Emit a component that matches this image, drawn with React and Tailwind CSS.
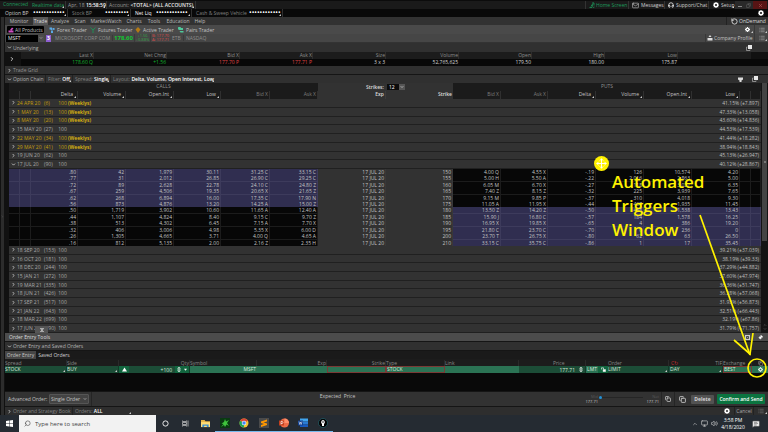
import clsx from 'clsx';
import { ChevronDown, ChevronRight, ChevronUp, Copy, Headphones, List, Mail, MessageSquareText, Monitor, Move, Pin, RotateCcw, Search, Volume2, X } from 'lucide-react';

const QUOTE_COLS = 'grid grid-cols-[16fr_73fr_73fr_73fr_73fr_73fr_73fr_73fr_73fr_73fr_73fr_17fr]';
const CHAIN_COLS = 'grid grid-cols-[11fr_11fr_47fr_48fr_48fr_47fr_49fr_48fr_68fr_67fr_48fr_47fr_48fr_48fr_48fr_48fr_11fr_10fr]';
const ORDER_COLS = 'grid grid-cols-[62fr_52fr_71fr_67fr_70fr_59fr_59fr_74fr_67fr_12fr_10fr_61fr_54fr_29fr_16fr]';

const nearExpirations = [
    ['24 APR 20', '(6)', true, '41.15% (±7.897)'],
    ['1 MAY 20', '(13)', true, '47.33% (±13.058)'],
    ['8 MAY 20', '(20)', true, '43.60% (±14.836)'],
    ['15 MAY 20', '(27)', false, '44.53% (±17.539)'],
    ['22 MAY 20', '(34)', true, '41.44% (±18.282)'],
    ['29 MAY 20', '(41)', true, '38.94% (±18.843)'],
    ['19 JUN 20', '(62)', false, '45.13% (±26.947)'],
    ['17 JUL 20', '(90)', false, '40.12% (±28.867)'],
];

const farExpirations = [
    ['18 SEP 20', '(153)', false, '39.21% (±37.039)'],
    ['16 OCT 20', '(181)', false, '38.19% (±39.33)'],
    ['18 DEC 20', '(244)', false, '37.29% (±44.882)'],
    ['15 JAN 21', '(272)', false, '37.60% (±47.974)'],
    ['19 MAR 21', '(335)', false, '36.36% (±51.747)'],
    ['18 JUN 21', '(426)', false, '36.28% (±57.068)'],
    ['17 SEP 21', '(517)', false, '31.93% (±56.873)'],
    ['21 JAN 22', '(643)', false, '32.51% (±66.443)'],
    ['18 MAR 22', '(699)', false, '32.19% (±67.86)'],
    ['17 JUN 22', '(790)', false, '31.79% (±71.757)'],
];

const strikes = [
    ['.80', '42', '1,979', '30.11', '31.25 C', '33.15 C', '150', '4.00 Q', '4.55 X', '-.19', '126', '10,574', '4.20'],
    ['.77', '31', '2,012', '26.85', '26.90 C', '29.25 C', '155', '5.00 H', '5.50 A', '-.22', '2,016', '2,863', '5.00'],
    ['.72', '89', '2,628', '22.78', '24.10 C', '24.80 Z', '160', '6.05 M', '6.70 X', '-.27', '118', '3,027', '6.35'],
    ['.67', '259', '4,506', '19.35', '20.65 X', '21.65 Z', '165', '7.40 Z', '8.15 Z', '-.32', '225', '3,939', '7.65'],
    ['.62', '268', '6,894', '16.00', '17.35 C', '17.90 N', '170', '9.15 M', '9.85 P', '-.37', '310', '4,018', '9.30'],
    ['.56', '873', '4,876', '13.20', '14.25 A', '15.00 Z', '175', '11.05 A', '11.95 X', '-.44', '467', '1,935', '11.45'],
    ['.50', '1,719', '3,902', '10.60', '11.65 A', '12.40 A', '180', '13.50 Z', '14.20 Z', '-.50', '458', '1,538', '13.43'],
    ['.44', '1,107', '4,824', '8.40', '9.15 C', '9.70 Z', '185', '15.90 J', '16.80 C', '-.57', '184', '1,578', '16.25'],
    ['.38', '513', '4,302', '6.45', '7.15 A', '7.70 X', '190', '16.95 X', '19.85 X', '-.65', '4', '386', '19.20'],
    ['.32', '406', '3,006', '4.98', '5.35 X', '6.00 D', '195', '21.80 C', '23.70 C', '-.70', '0', '236', '0'],
    ['.26', '1,305', '4,665', '3.71', '4.00 Q', '4.65 A', '200', '23.70 T', '26.75 X', '-.80', '62', '63', '26.50'],
    ['.16', '812', '5,135', '2.00', '2.16 Z', '2.35 H', '210', '33.15 C', '35.75 C', '-.86', '1', '17', '35.45'],
];

const quotes = [
    ['Last X', '178.60 Q', 'text-[#12b32c]'],
    ['Net Chng', '+1.56', 'text-[#12b32c]'],
    ['Bid X', '177.70 P', 'text-[#e04646]'],
    ['Ask X', '177.71 P', 'text-[#e04646]'],
    ['Size', '3 x 3', 'text-[#d8d8d8]'],
    ['Volume', '52,765,625', 'text-[#d8d8d8]'],
    ['Open', '179.50', 'text-[#d8d8d8]'],
    ['High', '180.00', 'text-[#d8d8d8]'],
    ['Low', '175.87', 'text-[#d8d8d8]'],
];

const Corner = () => (
    <svg viewBox="0 0 2 2" className="absolute right-px bottom-px size-[2px]"><path d="M2 0V2H0Z" fill="#ccc" /></svg>
);

const Gear = ({ className }) => (
    <svg viewBox="0 0 24 24" className={clsx('shrink-0', className)} fill="currentColor">
        <path fillRule="evenodd" d="M10 0h4l.6 3.400 2.200.9L19.600 2.300l2.400 2.400-2 2.800.9 2.200L24 10v4l-3.100.6-.9 2.200 2 2.800-2.400 2.400-2.800-2-2.200.9L14 24h-4l-.6-3.100-2.200-.9-2.800 2L2 19.600l2-2.800-.9-2.200L0 14v-4l3.100-.3.9-2.200-2-2.800L4.400 2.300l2.800 2 2.200-.9ZM12 8a4 4 0 100 8 4 4 0 000-8Z" />
    </svg>
);

const Detach = ({ className }) => (
    <svg viewBox="0 0 12 12" className={clsx('shrink-0', className)}>
        <path d="M4 0h8v8H4Z" fill="#e8e8e8" />
        <path d="M3 4H1v7h7V9" fill="none" stroke="#aaa" strokeWidth="1.500" />
    </svg>
);

const Spinner = () => (
    <svg viewBox="0 0 8 10" className="h-[5px] w-1"><path d="M4 0l4 3H0ZM1 4.500h6v1H1ZM4 10l4-3H0Z" fill="#fff" /></svg>
);

const TopBar = () => (
    <header className="flex h-[9px] items-stretch border-t border-[#0c0c0c] bg-[#1a1a1a] text-[#999]">
        <span className="w-[30px] pl-[3px] text-[#1d9c5c]">Connected</span>
        <button className="relative w-[36px] border-r border-[#333] pl-[2px] text-left text-[#1d9c5c]">Realtime data<Corner /></button>
        <button className="relative w-[41px] border-r border-[#333] pl-[2px] text-left">Apr, 18 <span className="font-semibold text-white">15:58:59</span><Corner /></button>
        <button className="relative w-[89px] border-r border-[#333] pl-[2px] text-left">Account: <span className="font-semibold text-[#ececec]">&lt;TOTAL&gt; (ALL ACCOUNTS)</span><Corner /></button>
        <nav className="ml-auto flex items-stretch text-[#cfcfcf]">
            <button className="flex w-[43px] items-center gap-px border-l border-[#333] pl-[3px] text-[#1d9c5c]">
                <svg viewBox="0 0 12 12" className="size-[6px] shrink-0"><path d="M1 11h5l2-9M4 9l2-4M8 11l3-1M7 1l3 1v5" fill="none" stroke="currentColor" strokeWidth="1.500" /></svg>
                Home Screen
            </button>
            <button className="flex w-9 items-center gap-[2px] border-l border-[#333] pl-[3px]"><Mail className="size-[7px]" />Messages</button>
            <button className="flex w-11 items-center gap-[2px] border-l border-[#333] pl-[3px]"><Headphones className="size-[6px] shrink-0 text-white" strokeWidth={3} />Support/Chat</button>
            <button className="relative flex w-[27px] items-center gap-[2px] border-l border-[#333] pl-1"><Gear className="size-[6px] text-white" />Setup<Corner /></button>
            <button className="flex w-[9px] items-center justify-center bg-[#292929]" aria-label="Minimize"><i className="mt-[2px] block h-px w-1 bg-[#888]" /></button>
            <button className="flex w-[9px] items-center justify-center bg-[#292929] text-[#777]" aria-label="Restore"><Copy className="size-[5px] -scale-x-100" /></button>
            <button className="mr-px flex w-[14px] items-center justify-center bg-[#571414] text-[#b05050]" aria-label="Close"><X className="size-[5px]" strokeWidth={3} /></button>
        </nav>
    </header>
);

const Balance = ({ label, stars, className, labelClass }) => (
    <button className={clsx('relative flex items-center border-r border-[#303030] pl-1', className)}>
        <span className={clsx('shrink-0 text-left', labelClass)}>{label}</span>
        <span className="text-[7px] text-white">{'•'.repeat(stars)}</span>
        <Corner />
    </button>
);

const BalanceBar = () => (
    <div className="flex h-2 items-stretch bg-[#090909] pl-px text-[#c8c8c8]">
        <Balance label="Option BP" stars={12} className="w-[67px]" labelClass="w-7" />
        <Balance label="Stock BP" stars={9} className="w-[63px] text-[#808080]" labelClass="w-[33px]" />
        <Balance label="Net Liq" stars={12} className="w-[61px] text-white" labelClass="w-[21px]" />
        <Balance label="Cash & Sweep Vehicle" stars={12} className="w-[91px] text-[#808080]" labelClass="w-[53px]" />
        <span className="ml-auto flex w-[15px] items-center justify-center text-white"><Gear className="size-[6px]" /></span>
    </div>
);

const MainTabs = () => (
    <nav className="flex h-2 items-stretch bg-[#323232] text-[#bdbdbd]">
        <button className="w-7">Monitor</button>
        <button className="w-[15px] bg-[#585858] text-[#ddd]">Trade</button>
        <button className="w-6">Analyze</button>
        <button className="w-4">Scan</button>
        <button className="w-9">MarketWatch</button>
        <button className="w-5">Charts</button>
        <button className="w-5">Tools</button>
        <button className="w-7">Education</button>
        <button className="w-4">Help</button>
        <button className="ml-auto flex w-[42px] items-center gap-px border-l border-[#222] pl-1 text-[#ddd]"><RotateCcw className="size-[7px]" strokeWidth={3} />OnDemand</button>
    </nav>
);

const Products = () => (
    <div className="flex h-[9px] items-center bg-[#4a4a4a] text-[#c4c4c4]">
        <button className="ml-[2px] flex h-[7px] w-[37px] items-center gap-px rounded-[1px] bg-black pl-px">
            <svg viewBox="0 0 12 12" className="size-[6px] shrink-0"><path d="M1 7h10v4H1ZM4 6l4-5 3 2-4 4Z" fill="#d14fc4" /></svg>All Products
        </button>
        <button className="flex w-[43px] items-center gap-[2px] pl-[5px]">
            <svg viewBox="0 0 12 12" className="size-[6px] shrink-0"><path d="M1 1h5v4H1ZM7 2h4v4H7ZM3 5l3 3 3-3M4 8h4v4H4Z" fill="#5aa9e6" /></svg>Forex Trader
        </button>
        <button className="flex w-[45px] items-center gap-[2px] pl-[3px]">
            <svg viewBox="0 0 12 12" className="size-[6px] shrink-0"><path d="M1 1l5 5 5-5M6 6v6" fill="none" stroke="#1e8d55" strokeWidth="2" /></svg>Futures Trader
        </button>
        <button className="flex w-[43px] items-center gap-[2px] pl-[3px]">
            <svg viewBox="0 0 12 12" className="size-[6px] shrink-0"><path d="M6 0l5 5-5 7-5-7Z" fill="#b47a14" /></svg>Active Trader
        </button>
        <button className="flex items-center gap-[2px] pl-[3px]">
            <svg viewBox="0 0 12 12" className="size-[6px] shrink-0"><path d="M0 3a3 3 0 016-1h4v4H4a3 3 0 01-4-3ZM3 8h8v3H5Z" fill="#4fc99a" /></svg>Pairs Trader
        </button>
        <span className="relative ml-auto flex h-full w-[14px] items-center justify-center text-white"><Gear className="size-[5px]" /><Corner /></span>
        <span className="relative flex h-full w-[14px] items-center justify-center border-l border-[#383838]"><List className="size-[6px]" /><Corner /></span>
    </div>
);

const SymbolBar = () => (
    <div className="flex h-[9px] items-center border-b border-[#333] bg-[#464646] text-[#8d8d8d]">
        <label className="ml-px flex h-[7px] w-[38px] items-center bg-black">
            <input aria-label="Symbol" defaultValue="MSFT" className="h-[7px] w-8 pl-[2px] text-[#e6e6e6] outline-none" />
            <span className="flex h-full w-[6px] items-center justify-center bg-[#4c4c4c] text-[#aaa]"><ChevronDown className="size-1" strokeWidth={4} /></span>
        </label>
        <span className="ml-[2px] flex h-[7px] w-[5px] items-center justify-center bg-[#8e5fd0] font-bold text-white">3</span>
        <span className="w-[61px] pl-1">MICROSOFT CORP COM</span>
        <b className="w-[22px] border-l border-[#3a3a3a] text-center text-[6px] text-[#14c432]">178.60</b>
        <span className="w-4 border-l border-[#3a3a3a] text-center text-[4px] leading-[4px] text-[#35a549]">+1.56<br />+0.88%</span>
        <span className="w-[20px] border-l border-[#3a3a3a] text-center text-[4px] leading-[4px] text-[#dd4c4c]">B: 177.70<br />A: 177.71</span>
        <span className="w-[13px] pl-[2px]">ETB</span>
        <span className="border-l border-[#3a3a3a] pl-[2px]">NASDAQ</span>
        <button className="ml-auto flex h-full w-[49px] items-center gap-px border-l border-[#383838] pl-px text-[#c0c0c0]">
            <svg viewBox="0 0 12 12" className="size-[6px] shrink-0"><path d="M1 6h10v5H1ZM3 4h6l-3-4Z" fill="#ddd" /></svg>Company Profile
        </button>
        <span className="relative flex h-full w-[14px] items-center justify-center border-l border-[#383838] text-[#bbb]"><List className="size-[6px]" /><Corner /></span>
    </div>
);

const Underlying = () => (
    <section>
        <div className="flex h-[9px] items-center bg-[#303030] pl-[2px] text-[#b4b4b4]">
            <ChevronDown className="mr-px size-[5px] text-white" strokeWidth={3} />Underlying
            <Detach className="mr-4 ml-auto size-[6px]" />
        </div>
        <table className="block w-full text-right">
            <thead className="block">
                <tr className={clsx(QUOTE_COLS, 'h-[7px] bg-[#1c1c1c] text-[#8f8f8f]')}>
                    <th className="relative z-10 bg-[#111]"><ChevronRight className="absolute top-1 left-1 size-[6px] text-white" strokeWidth={3} /></th>
                    {quotes.map(([name]) => <th key={name} className="border-r border-[#2d2d2d] font-normal">{name}</th>)}
                    <th />
                    <th className="bg-[#111]" />
                </tr>
            </thead>
            <tbody className="block">
                <tr className={clsx(QUOTE_COLS, 'h-[7px] bg-[#080808]')}>
                    <td className="bg-[#111]" />
                    {quotes.map(([name, value, color]) => <td key={name} className={clsx('pr-px', color)}>{value}</td>)}
                </tr>
            </tbody>
        </table>
    </section>
);

const Expiration = ({ row, open }) => {
    const [date, days, weekly, move] = row;
    return (
        <tr className="flex items-center border-b border-[#202020] bg-[#323232] text-[#a8a8a8]">
            <td className={clsx('flex flex-1 items-center pl-[2px]', weekly && 'text-[#c29d0c]')}>
                {open ? <ChevronDown className="size-[5px] text-white" strokeWidth={3} /> : <ChevronRight className="size-[5px] text-white" strokeWidth={3} />}
                <span className="w-[28px] pl-px">{date}</span>
                <span className="w-[13px]">{days}</span>
                <span className="w-[11px] text-center">100</span>
                {weekly && <span className="font-semibold text-[#e2bf0c]">(Weeklys)</span>}
            </td>
            <td className="pr-[2px] text-[#bdbdbd]">{move}</td>
        </tr>
    );
};

const StrikeRow = ({ row, index }) => {
    const itm = index < 6;
    const call = clsx('border-r border-b pr-px', itm ? 'border-[#3d3b5c] bg-[#302e50]' : 'border-[#1c1c1c] bg-[#070707]');
    const put = clsx('border-r border-b pr-px', itm ? 'border-[#1c1c1c] bg-[#070707]' : 'border-[#3d3b5c] bg-[#302e50]');
    const mid = 'border-r border-[#383838] bg-[#323232] pr-px';
    return (
        <tr className={clsx(CHAIN_COLS, 'text-right text-[#c4c4c4]')}>
            <td className={call} />
            <td className={call} />
            {row.slice(0, 6).map((v, i) => <td key={i} className={call}>{v}</td>)}
            <td className={mid}>17 JUL 20</td>
            <td className={mid}>{row[6]}</td>
            {row.slice(7).map((v, i) => <td key={i} className={put}>{v}</td>)}
            <td className={put} />
            <td className={put} />
        </tr>
    );
};

const Sortable = ({ children }) => <th className="relative border-r border-[#303030] pr-1 font-normal text-[#c2c2c2]">{children}<Corner /></th>;
const Fixed = ({ children }) => <th className="border-r border-[#303030] pr-px font-normal text-[#7c7c7c]">{children}</th>;

const OptionChain = () => (
    <section>
        <div className="flex h-2 items-center bg-[#303030] pl-[2px] text-[#909090]"><ChevronRight className="mr-px size-[5px] text-white" strokeWidth={3} />Trade Grid</div>
        <div className="mt-px flex h-2 items-stretch bg-[#303030] pl-[2px] text-[#828282]">
            <span className="flex w-[38px] items-center text-[#b4b4b4]"><ChevronDown className="mr-px size-[5px] text-white" strokeWidth={3} />Option Chain</span>
            <button className="relative w-[27px] border-l border-[#222] pl-[2px] text-left">Filter: <span className="font-semibold text-white">Off</span><Corner /></button>
            <button className="relative w-[38px] border-l border-[#222] pl-[2px] text-left">Spread: <span className="font-semibold text-white">Single</span><Corner /></button>
            <button className="relative w-[105px] border-l border-[#222] pl-[2px] text-left">Layout: <span className="font-semibold text-white">Delta, Volume, Open Interest, Low</span><Corner /></button>
            <span className="mr-[10px] ml-auto flex items-center gap-[9px] text-[#ddd]">
                <svg viewBox="0 0 10 10" className="size-[5px]"><path d="M0 1h10v4L7 7v3H3V7L0 5Z" fill="#ddd" /></svg>
                <Detach className="size-[6px]" />
            </span>
        </div>
        <div className="flex">
            <table className="relative block flex-1 border-l-4 border-[#111] bg-[#1b1b1b]">
                <thead className="block text-right">
                    <tr className="grid h-2 grid-cols-[309fr_135fr_308fr] text-center text-[#929292]">
                        <th className="font-normal">CALLS</th>
                        <th className="flex items-center justify-center gap-[3px] bg-[#323232] font-semibold text-[#ddd]">
                            <label htmlFor="strikes">Strikes:</label>
                            <span className="flex h-[6px] items-center bg-[#0c0c0c]">
                                <select id="strikes" className="h-[6px] w-3 appearance-none pl-[2px] font-normal text-white"><option>12</option></select>
                                <span className="flex h-full w-[6px] items-center bg-[#555]"><ChevronDown className="ml-px size-1" strokeWidth={4} /></span>
                            </span>
                        </th>
                        <th className="font-normal">PUTS</th>
                    </tr>
                    <tr className={clsx(CHAIN_COLS, 'h-2')}>
                        <Fixed /><Fixed />
                        <Sortable>Delta</Sortable><Sortable>Volume</Sortable><Sortable>Open.Int</Sortable><Sortable>Low</Sortable>
                        <Fixed>Bid X</Fixed><Fixed>Ask X</Fixed>
                        <th className="border-r border-[#3c3c3c] bg-[#323232] pr-px font-semibold text-[#ddd]">Exp</th>
                        <th className="bg-[#323232] pr-px font-semibold text-[#ddd]">Strike</th>
                        <Fixed>Bid X</Fixed><Fixed>Ask X</Fixed>
                        <Sortable>Delta</Sortable><Sortable>Volume</Sortable><Sortable>Open.Int</Sortable><Sortable>Low</Sortable>
                        <Fixed /><Fixed />
                    </tr>
                </thead>
                <tbody className="grid h-[70px] auto-rows-fr">
                    {nearExpirations.map((row, i) => <Expiration key={row[0]} row={row} open={i === 7} />)}
                </tbody>
                <tbody className="grid h-[77px] auto-rows-fr">
                    {strikes.map((row, i) => <StrikeRow key={row[6]} row={row} index={i} />)}
                </tbody>
                <tbody className="grid h-[87px] auto-rows-fr">
                    {farExpirations.map((row) => <Expiration key={row[0]} row={row} />)}
                </tbody>
                <caption className="absolute bottom-0 left-[26px] flex h-[7px] w-[13px] items-center justify-center bg-[#555] text-white">
                    <svg viewBox="0 0 8 8" className="size-1"><path d="M0 0h8v1H0ZM1 3h6L4 6ZM0 7h8v1H0Z" fill="#fff" /></svg>
                </caption>
            </table>
            <div className="flex w-[7px] flex-col items-center bg-[#141414] text-[#999]">
                <div className="flex h-[158px] w-[5px] items-center justify-center bg-[#444]"><i className="size-[2px] bg-[#777]" /></div>
                <span className="mt-auto flex flex-col pb-[2px]"><ChevronUp className="size-1" /><ChevronDown className="size-1" /></span>
            </div>
        </div>
    </section>
);

const OrderEntry = () => {
    const head = 'border-r border-[#2a2a2a] font-normal';
    const dim = 'relative border-r border-[#123a28] bg-[#1c4d37]';
    const lit = 'bg-[#2b7354]';
    return (
        <section>
            <div className="flex h-2 items-center bg-[#4c4c4c] pl-1 text-[#dcdcdc]">
                Order Entry Tools
                <span className="mr-[5px] ml-auto flex items-center gap-2 text-white"><X className="size-[5px] border border-[#ccc]" /><Pin className="size-[5px] rotate-45 fill-white" /></span>
            </div>
            <div className="mt-px flex h-2 items-center bg-[#303030] pl-[2px] text-[#b4b4b4]"><ChevronDown className="mr-px size-[5px] text-white" strokeWidth={3} />Order Entry and Saved Orders</div>
            <div className="mt-px flex h-2 bg-[#1a1a1a] text-[#c4c4c4]">
                <button className="w-[31px] bg-[#464646]">Order Entry</button>
                <button className="w-9 text-[#d4d4d4]">Saved Orders</button>
            </div>
            <table className="block w-full text-left">
                <thead className="block bg-[#1c1c1c] pt-px">
                    <tr className={clsx(ORDER_COLS, 'h-[6px] text-[#888]')}>
                        <th className={head}>Spread</th>
                        <th className={head}>Side</th>
                        <th className={clsx(head, 'text-right')}>Qty</th>
                        <th className={head}>Symbol</th>
                        <th className={clsx(head, 'text-right')}>Exp</th>
                        <th className={clsx(head, 'text-right')}>Strike</th>
                        <th className={head}>Type</th>
                        <th className={head}>Link</th>
                        <th className={clsx(head, 'pl-[34px]')}>Price</th>
                        <th /><th />
                        <th className={head}>Order</th>
                        <th className={clsx(head, 'flex justify-between pl-[2px]')}><i className="text-[#c23030] not-italic">C↻</i>TIF</th>
                        <th className={head}>Exchange</th>
                        <th className="flex items-center justify-center text-[#bbb]"><Copy className="size-[5px]" /></th>
                    </tr>
                </thead>
                <tbody className="block bg-[#090909] pb-[18px]">
                    <tr className={clsx(ORDER_COLS, 'h-[7px] text-[#d6e8de]')}>
                        <td className={dim}>STOCK<Corner /></td>
                        <td className={dim}>BUY<Corner /></td>
                        <td className={clsx(dim, 'flex items-center')}>
                            <span className="flex h-full w-[10px] items-center justify-center bg-[#12663f]"><svg viewBox="0 0 10 8" className="size-[5px]"><path d="M5 0l5 8H0Z" fill="#fff" /></svg></span>
                            <span className="flex-1 pr-[3px] text-right">+100</span>
                            <span className="flex h-full w-[14px] items-center justify-around bg-[#12663f]">
                                <Spinner />
                                <svg viewBox="0 0 8 8" className="size-[3px]"><path d="M0 2h8L4 7Z" fill="#fff" /></svg>
                            </span>
                        </td>
                        <td className={clsx(lit, 'pr-px text-right')}>MSFT</td>
                        <td className={lit} />
                        <td className={clsx(lit, 'border border-[#7a3a35]')} />
                        <td className={clsx(lit, 'border border-[#7a3a35] leading-[5px]')}>STOCK</td>
                        <td className={lit} />
                        <td className={clsx(dim, 'flex items-center justify-end gap-1 pr-[2px]')}>177.71<Spinner /></td>
                        <td className={clsx(lit, 'text-center')}>LMT</td>
                        <td className="flex items-center justify-center bg-[#12663f]"><svg viewBox="0 0 12 12" className="size-[5px]"><path d="M5 6h6v5H5Z" fill="#fff" stroke="#fff" /><path d="M1 6V2h5v3" fill="none" stroke="#fff" strokeWidth="1.500" /></svg></td>
                        <td className={dim}>LIMIT<Corner /></td>
                        <td className={clsx(dim, 'pl-px')}>DAY<Corner /></td>
                        <td className={clsx(lit, 'border border-[#7a3a35] leading-[5px]')}>BEST</td>
                        <td className={clsx(lit, 'flex items-center justify-center')}><Gear className="size-[5px]" /></td>
                    </tr>
                </tbody>
            </table>
            <div className="mt-px flex h-[14px] items-center bg-[#323232] text-[#c4c4c4]">
                <div className="flex h-full w-[87px] items-center gap-px border-r border-[#252525] pl-[3px]">
                    <label htmlFor="advanced" className="w-10">Advanced Order:</label>
                    <span className="relative flex h-[10px] w-10 items-center rounded-[1px] border border-[#555] bg-[#434343]">
                        <select id="advanced" className="w-full appearance-none pl-px"><option>Single Order</option></select>
                        <ChevronDown className="absolute right-px size-1" strokeWidth={4} />
                    </span>
                </div>
                <span className="flex-1 self-start text-center leading-[9px]">Expected&nbsp; Price</span>
                <label className="grid h-full w-[76px] grid-cols-[15px_1fr_15px] items-center text-[#c8c8c8]">
                    <span className="text-right text-[4px] leading-[5px]"><span className="text-[#555]">Mid</span><br />177.71</span>
                    <input type="range" aria-label="Price" defaultValue="0" className="mx-px mb-1 h-px min-w-0 appearance-none bg-[#252525] [&::-webkit-slider-thumb]:size-[3px] [&::-webkit-slider-thumb]:appearance-none [&::-webkit-slider-thumb]:rounded-full [&::-webkit-slider-thumb]:bg-[#2292d8]" />
                    <span className="text-right text-[4px] leading-[5px]"><span className="text-[#555]">Nat</span><br />177.71</span>
                </label>
                <button className="ml-[2px] flex h-full w-[14px] items-center justify-center border-x border-[#252525]" aria-label="Copy order"><Copy className="size-[6px]" strokeWidth={3} /></button>
                <button className="flex h-full w-[14px] items-center justify-center" aria-label="Save order"><Copy className="size-[7px]" strokeWidth={3} /></button>
                <button className="ml-[2px] h-[9px] w-[23px] rounded-[1px] bg-[#525252] font-bold text-[#d4d4d4]">Delete</button>
                <button className="mr-[3px] ml-[3px] h-[10px] w-12 rounded-[1px] bg-[#0b7440] font-semibold text-white">Confirm and Send</button>
            </div>
            <div className="mt-px flex h-2 items-stretch bg-[#2e2e2e] pl-[2px] text-[#828282]">
                <span className="flex w-[65px] items-center"><ChevronRight className="mr-px size-[5px] shrink-0 text-white" strokeWidth={3} />Order and Strategy Book</span>
                <button className="relative w-[60px] border-l border-[#222] pl-[2px] text-left">Orders: <span className="font-semibold text-white">ALL</span><Corner /></button>
                <button className="ml-auto flex w-[14px] items-center justify-center text-white" aria-label="Clear"><Gear className="size-[6px]" /></button>
                <button className="w-5 border-x border-[#222] text-[#aaa]">Cancel</button>
                <span className="relative flex w-[14px] items-center justify-center"><List className="size-[6px]" /><Corner /></span>
            </div>
        </section>
    );
};

const Taskbar = () => (
    <footer className="flex h-[17px] items-stretch bg-[#252b32] text-[#ddd]">
        <button className="flex w-[19px] items-center justify-center" aria-label="Start">
            <svg viewBox="0 0 14 14" className="size-[7px]"><path d="M0 2l6-1v5.500H0ZM7 1l7-1v6.500H7ZM0 7.500h6V13l-6-1ZM7 7.500h7V14l-7-1Z" fill="#fff" /></svg>
        </button>
        <label className="flex w-[137px] items-center bg-[#f2f2f2] pl-[5px] text-[#444]">
            <Search className="size-[7px] -scale-x-100" />
            <input aria-label="Search" placeholder="Type here to search" className="ml-1 flex-1 text-[6px] outline-none placeholder:text-[#444]" />
        </label>
        <nav className="grid w-[177px] grid-cols-9 [&>button]:flex [&>button]:items-center [&>button]:justify-center">
            <button aria-label="Cortana"><svg viewBox="0 0 12 12" className="size-[7px]"><circle cx="6" cy="6" r="4.500" fill="none" stroke="#fff" strokeWidth="1.500" /></svg></button>
            <button aria-label="Task view"><svg viewBox="0 0 14 14" className="size-[7px]"><path d="M1 1v2h8V1M1 13v-2h8v2M1 5h8v4H1ZM12 1v12" fill="none" stroke="#ddd" strokeWidth="1.300" /></svg></button>
            <button aria-label="File Explorer"><svg viewBox="0 0 20 18" className="size-[9px]"><path d="M0 1h8l2 3h10v13H0Z" fill="#e7b445" /><path d="M0 6h20v11H0Z" fill="#ffdc75" /><path d="M3 11h14v6h-4v-3H7v3H3Z" fill="#3a8fd1" /></svg></button>
            <button className="border-b border-[#76b9ed]" aria-label="thinkorswim"><svg viewBox="0 0 20 20" className="size-[10px]"><path d="M0 0h20v20H0Z" fill="#0a3a12" /><path d="M2 18l5-6-4-1 5-3 2-6 2 5 6-3-4 6 4 6-5-3-3 5-2-4Z" fill="#3fc53c" /></svg></button>
            <button className="border-b border-[#76b9ed]" aria-label="Chrome">
                <svg viewBox="0 0 20 20" className="size-[10px]">
                    <circle cx="10" cy="10" r="9" fill="#f1c232" />
                    <path d="M10 10L2.200 5.500A9 9 0 0117.800 5.500Z" fill="#db4437" />
                    <path d="M10 10L2.200 5.500A9 9 0 0010 19Z" fill="#1fa15a" />
                    <circle cx="10" cy="10" r="4.500" fill="#fff" /><circle cx="10" cy="10" r="3.500" fill="#4285f4" />
                </svg>
            </button>
            <button className="border-b border-[#76b9ed]" aria-label="Sublime Text"><svg viewBox="0 0 20 20" className="size-[10px]"><path d="M0 0h20v20H0Z" fill="#4a4a4a" /><path d="M4 7l12-4v4L9 9l7 2v3L4 18v-4l6-2-6-2Z" fill="#ff9800" /></svg></button>
            <button className="border-b border-[#76b9ed]" aria-label="PowerPoint"><svg viewBox="0 0 20 20" className="size-[10px]"><circle cx="11" cy="10" r="9" fill="#ed6c47" /><path d="M11 10V1a9 9 0 019 9Z" fill="#ff8f6b" /><path d="M0 5h10v10H0Z" fill="#c43e1c" /><path d="M4 13V7h2a1.500 1.500 0 010 4H4" fill="none" stroke="#fff" strokeWidth="1.300" /></svg></button>
            <button className="border-b border-[#76b9ed]" aria-label="Word"><svg viewBox="0 0 20 20" className="size-[10px]"><path d="M4 1h16v6H4Z" fill="#41a5ee" /><path d="M4 7h16v6H4Z" fill="#2b7cd3" /><path d="M4 13h16v5H4Z" fill="#185abd" /><path d="M0 5h10v10H0Z" fill="#103f91" /><path d="M2 7l1.500 6L5 8l1.500 5L8 7" fill="none" stroke="#fff" /></svg></button>
            <button className="border-b border-[#76b9ed]" aria-label="Lights"><svg viewBox="0 0 20 20" className="size-[10px]"><circle cx="10" cy="10" r="9" fill="#000" stroke="#2d8590" /><path d="M10 4a4.500 4.500 0 00-2 8v4h4v-4a4.500 4.500 0 00-2-8Z" fill="#fff" /><circle cx="10" cy="8" r="1.500" fill="#000" /></svg></button>
        </nav>
        <div className="mr-2 ml-auto flex items-center gap-[3px]">
            <ChevronUp className="size-[6px]" /><Monitor className="size-[7px]" /><Volume2 className="size-[7px]" />
            <span className="w-6 text-center leading-[7px] text-white">3:58 PM<br />4/18/2020</span>
            <MessageSquareText className="ml-1 size-2 fill-white text-[#555]" />
        </div>
    </footer>
);

// Tutorial callout drawn over the platform window
const Callout = () => (
    <div className="pointer-events-none absolute top-[154px] right-0 h-[230px] w-[176px] text-[#fff200]">
        <svg viewBox="0 0 176 230" className="absolute inset-0 size-full" fill="none" stroke="currentColor" strokeWidth="1.700">
            <path d="M108 61L158 201" />
            <path d="M142 186L158 200L161 179" />
            <circle cx="165" cy="214" r="9" />
        </svg>
        <span className="absolute top-[2px] left-[2px] flex size-[15px] items-center justify-center rounded-full bg-[#fff200] text-white"><Move className="size-[11px]" /></span>
        <p className="absolute top-4 left-5 text-[17px] leading-6 font-semibold">Automated<br />Triggers<br />Window</p>
    </div>
);

const App = () => (
    <div className="relative w-full overflow-hidden bg-[#151515] font-['Open_Sans','Noto_Sans',sans-serif] text-[5px] leading-[6px] whitespace-nowrap">
        <TopBar />
        <BalanceBar />
        <div className="flex">
            <aside className="relative flex w-[5px] shrink-0 flex-col items-start justify-center border-r border-l border-[#111] bg-[#2c2c2c] text-[#888]"><ChevronRight className="size-[3px]" /></aside>
            <main className="min-w-0 flex-1">
                <MainTabs />
                <Products />
                <SymbolBar />
                <Underlying />
                <OptionChain />
                <OrderEntry />
            </main>
        </div>
        <Taskbar />
        <Callout />
    </div>
);

export default App;
